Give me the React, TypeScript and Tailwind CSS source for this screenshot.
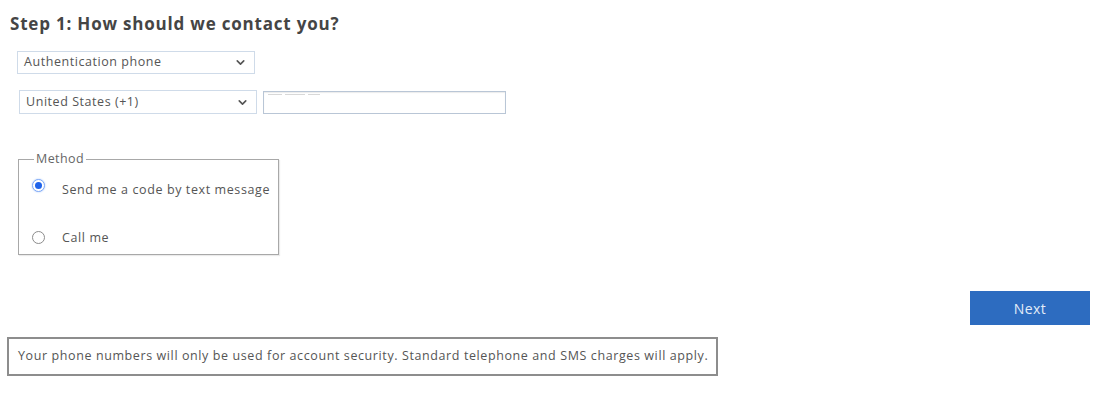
import { ChevronDown } from 'lucide-react'

const font = { fontFamily: '"Open Sans", "Noto Sans", Arial, sans-serif' }

function Select({ label, className }: { label: string; className: string }) {
  return (
    <div
      className={`flex items-center justify-between border border-[#cfdbe9] bg-white pl-[6px] pr-[7px] text-[12.5px] tracking-[0.55px] text-[#555] ${className}`}
    >
      <span className="leading-none">{label}</span>
      <ChevronDown size={13} strokeWidth={3} className="text-[#555]" />
    </div>
  )
}

function Radio({ checked }: { checked?: boolean }) {
  if (checked) {
    return (
      <span className="flex h-[13px] w-[13px] shrink-0 items-center justify-center rounded-full border-[1.5px] border-[#7ea9f6] bg-white shadow-[0_0_2px_#a9c7fb]">
        <span className="h-[7px] w-[7px] rounded-full bg-[#1f63ea]" />
      </span>
    )
  }
  return <span className="block h-[13px] w-[13px] shrink-0 rounded-full border-[1.5px] border-[#8c8c8c] bg-white" />
}

export default function App() {
  return (
    <div className="h-[396px] w-[1102px] overflow-hidden bg-white" style={font}>
      <h1 className="pl-[10px] pt-[13px] text-[17px] font-bold leading-[22px] tracking-[0.8px] text-[#454545]">
        Step 1: How should we contact you?
      </h1>

      <Select label="Authentication phone" className="ml-[17px] mt-[16px] h-[23px] w-[238px]" />

      <div className="ml-[19px] mt-[16px] flex items-center gap-[6px]">
        <Select label="United States (+1)" className="h-[24px] w-[238px]" />
        <div className="h-[23px] w-[243px] border border-[#b9c6d6] bg-white shadow-[inset_0_1px_1px_rgba(0,0,0,0.08)]">
          <div className="ml-[4px] mt-[2px] flex gap-[3px]">
            <span className="h-[1px] w-[14px] bg-[#d8d8d8]" />
            <span className="h-[1px] w-[20px] bg-[#d8d8d8]" />
            <span className="h-[1px] w-[12px] bg-[#d8d8d8]" />
          </div>
        </div>
      </div>

      <fieldset className="ml-[18px] mt-[37px] h-[104px] w-[261px] border border-[#a8a8a8] pl-[13px] shadow-[1px_1px_1px_rgba(0,0,0,0.08)]">
        <legend className="ml-[2px] px-[2px] text-[12.5px] leading-[16px] tracking-[0.4px] text-[#666]">Method</legend>
        <div className="mt-[4px] flex items-center gap-[17px] whitespace-nowrap text-[12.5px] tracking-[0.6px] text-[#555]">
          <Radio checked />
          <span className="pt-[10px]">Send me a code by text message</span>
        </div>
        <div className="mt-[27px] flex items-center gap-[17px] whitespace-nowrap text-[12.5px] tracking-[0.6px] text-[#555]">
          <Radio />
          <span className="pt-[2px]">Call me</span>
        </div>
      </fieldset>

      <div className="mt-[36px] flex justify-end pr-[12px]">
        <button className="h-[34px] w-[120px] bg-[#2d6cc0] text-[14px] tracking-[0.4px] text-[#e3ecf8]">Next</button>
      </div>

      <div className="ml-[7px] mt-[12px] flex h-[39px] w-[711px] items-center border-2 border-[#8d8d8d] pl-[9px] text-[12.5px] tracking-[0.6px] text-[#555]">
        Your phone numbers will only be used for account security. Standard telephone and SMS charges will apply.
      </div>
    </div>
  )
}
